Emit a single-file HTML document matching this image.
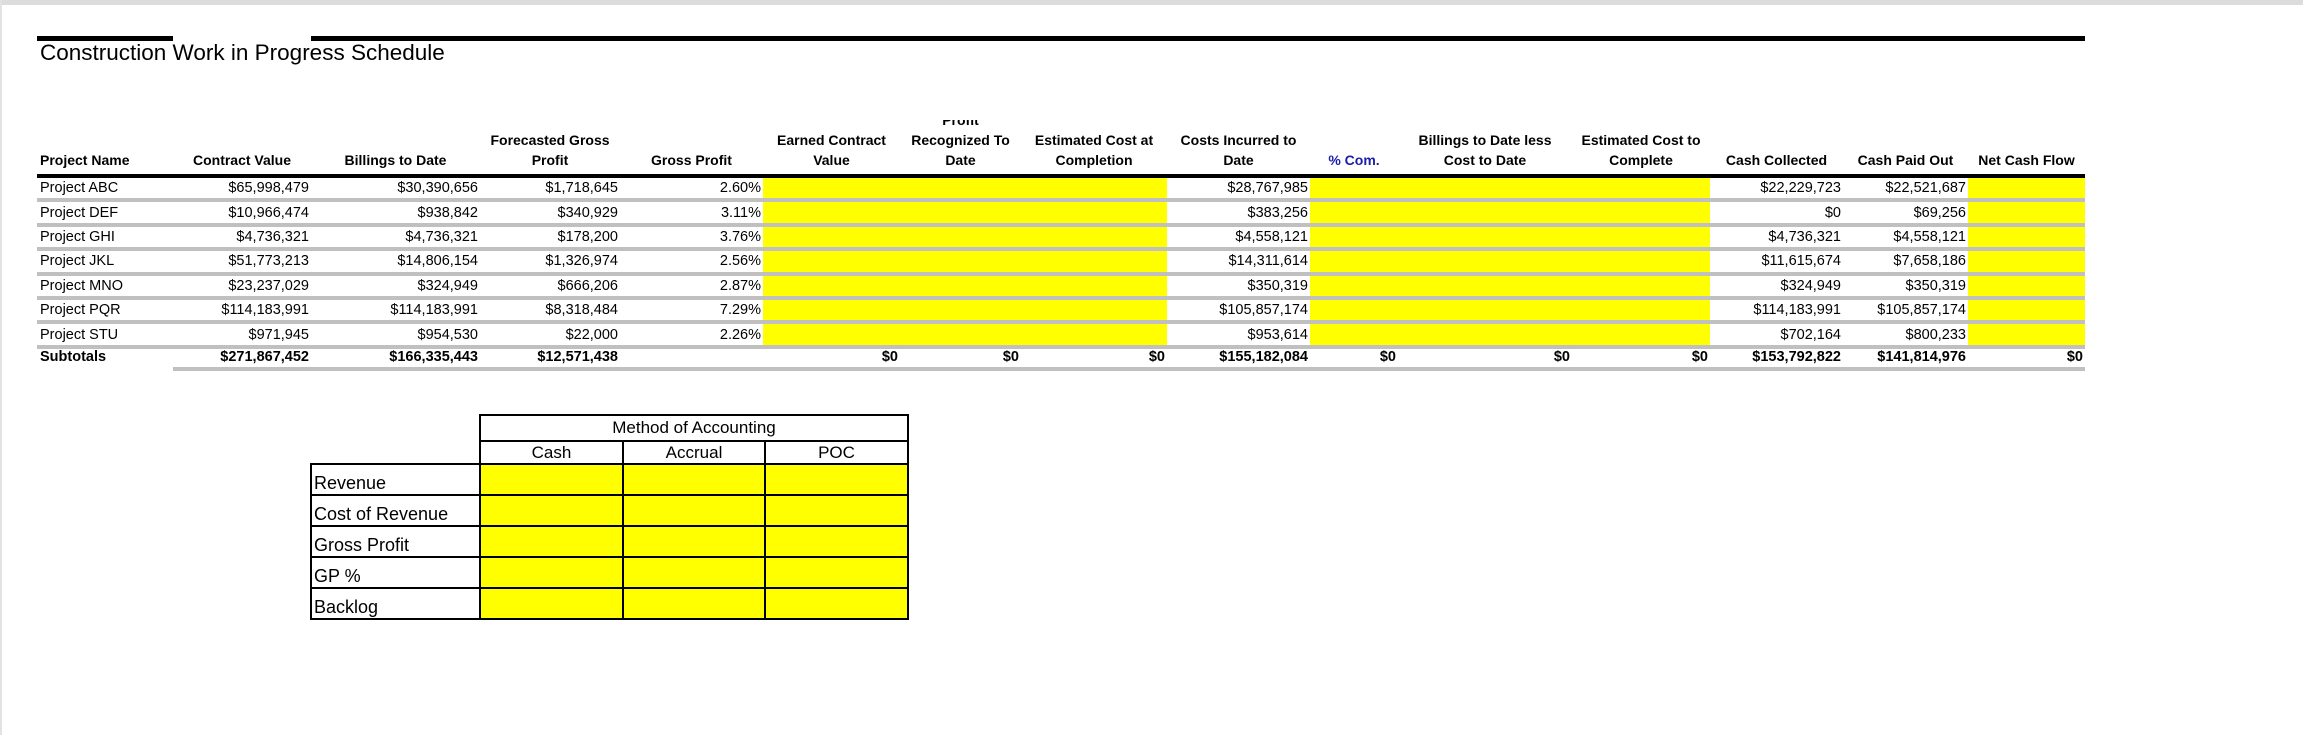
<!DOCTYPE html>
<html><head><meta charset="utf-8"><style>
html,body{margin:0;padding:0;background:#fff;}
body{width:2303px;height:735px;position:relative;overflow:hidden;font-family:"Liberation Sans",Arial,sans-serif;color:#000;}
.topbar{position:absolute;left:0;top:0;width:2303px;height:5px;background:#dcdcdc;}
.leftbar{position:absolute;left:0;top:0;width:2px;height:735px;background:#e2e2e2;}
.bl{position:absolute;background:#000;height:5px;top:36px;}
.title{position:absolute;left:40px;top:39px;font-size:22.5px;line-height:28px;white-space:nowrap;}
table.m{position:absolute;left:37px;top:120px;border-collapse:separate;border-spacing:0;table-layout:fixed;width:2048px;}
table.m td{padding:0 2px 0 0;white-space:nowrap;text-align:right;font-size:14.5px;overflow:hidden;}
table.m tr.h td{height:54px;vertical-align:bottom;border-bottom:4px solid #000;font-weight:bold;font-size:14px;text-align:center;padding:0;}
table.m tr.h td div{height:54px;overflow:hidden;display:flex;flex-direction:column;justify-content:flex-end;line-height:20px;padding-bottom:4px;box-sizing:border-box;}
table.m tr.r td{height:20.4px;line-height:20px;border-bottom:4px solid #c0c0c0;}
table.m td.n{text-align:left;padding-left:3px;}
table.m tr.h td.n{text-align:left;padding-left:3px;}
.y{background:#ffff00;}
table.m tr.s td{height:18px;line-height:16px;vertical-align:top;font-weight:bold;font-size:14.5px;border-bottom:4px solid #c0c0c0;}
table.m tr.s td.n{border-bottom:none;}
.blue{color:#1c1caa;}
table.b{position:absolute;left:310px;top:414px;border-collapse:collapse;table-layout:fixed;}
table.b td{border:2.5px solid #000;padding:0 0 0 2px;font-size:18px;white-space:nowrap;}
table.b td.e{border:none;}
</style></head><body>
<div class="topbar"></div><div class="leftbar"></div>
<div class="bl" style="left:37px;width:136px;"></div>
<div class="bl" style="left:311px;width:1774px;"></div>
<div class="title">Construction Work in Progress Schedule</div>
<table class="m">
<colgroup><col style="width:136px"><col style="width:138px"><col style="width:169px"><col style="width:140px"><col style="width:143px"><col style="width:137px"><col style="width:121px"><col style="width:146px"><col style="width:143px"><col style="width:88px"><col style="width:174px"><col style="width:138px"><col style="width:133px"><col style="width:125px"><col style="width:117px"></colgroup>
<tr class="h">
<td class="n"><div>Project Name</div></td>
<td><div>Contract Value</div></td>
<td><div>Billings to Date</div></td>
<td><div>Forecasted Gross<br>Profit</div></td>
<td><div>Gross Profit</div></td>
<td><div>Earned Contract<br>Value</div></td>
<td><div>Profit<br>Recognized To<br>Date</div></td>
<td><div>Estimated Cost at<br>Completion</div></td>
<td><div>Costs Incurred to<br>Date</div></td>
<td class="blue"><div>% Com.</div></td>
<td><div>Billings to Date less<br>Cost to Date</div></td>
<td><div>Estimated Cost to<br>Complete</div></td>
<td><div>Cash Collected</div></td>
<td><div>Cash Paid Out</div></td>
<td><div>Net Cash Flow</div></td>
</tr>
<tr class="r"><td class="n">Project ABC</td><td>$65,998,479</td><td>$30,390,656</td><td>$1,718,645</td><td>2.60%</td><td class="y"></td><td class="y"></td><td class="y"></td><td>$28,767,985</td><td class="y"></td><td class="y"></td><td class="y"></td><td>$22,229,723</td><td>$22,521,687</td><td class="y"></td></tr>
<tr class="r"><td class="n">Project DEF</td><td>$10,966,474</td><td>$938,842</td><td>$340,929</td><td>3.11%</td><td class="y"></td><td class="y"></td><td class="y"></td><td>$383,256</td><td class="y"></td><td class="y"></td><td class="y"></td><td>$0</td><td>$69,256</td><td class="y"></td></tr>
<tr class="r"><td class="n">Project GHI</td><td>$4,736,321</td><td>$4,736,321</td><td>$178,200</td><td>3.76%</td><td class="y"></td><td class="y"></td><td class="y"></td><td>$4,558,121</td><td class="y"></td><td class="y"></td><td class="y"></td><td>$4,736,321</td><td>$4,558,121</td><td class="y"></td></tr>
<tr class="r"><td class="n">Project JKL</td><td>$51,773,213</td><td>$14,806,154</td><td>$1,326,974</td><td>2.56%</td><td class="y"></td><td class="y"></td><td class="y"></td><td>$14,311,614</td><td class="y"></td><td class="y"></td><td class="y"></td><td>$11,615,674</td><td>$7,658,186</td><td class="y"></td></tr>
<tr class="r"><td class="n">Project MNO</td><td>$23,237,029</td><td>$324,949</td><td>$666,206</td><td>2.87%</td><td class="y"></td><td class="y"></td><td class="y"></td><td>$350,319</td><td class="y"></td><td class="y"></td><td class="y"></td><td>$324,949</td><td>$350,319</td><td class="y"></td></tr>
<tr class="r"><td class="n">Project PQR</td><td>$114,183,991</td><td>$114,183,991</td><td>$8,318,484</td><td>7.29%</td><td class="y"></td><td class="y"></td><td class="y"></td><td>$105,857,174</td><td class="y"></td><td class="y"></td><td class="y"></td><td>$114,183,991</td><td>$105,857,174</td><td class="y"></td></tr>
<tr class="r"><td class="n">Project STU</td><td>$971,945</td><td>$954,530</td><td>$22,000</td><td>2.26%</td><td class="y"></td><td class="y"></td><td class="y"></td><td>$953,614</td><td class="y"></td><td class="y"></td><td class="y"></td><td>$702,164</td><td>$800,233</td><td class="y"></td></tr>
<tr class="s"><td class="n">Subtotals</td><td>$271,867,452</td><td>$166,335,443</td><td>$12,571,438</td><td></td><td>$0</td><td>$0</td><td>$0</td><td>$155,182,084</td><td>$0</td><td>$0</td><td>$0</td><td>$153,792,822</td><td>$141,814,976</td><td>$0</td></tr>
</table>
<table class="b">
<colgroup><col style="width:169px"><col style="width:143px"><col style="width:142px"><col style="width:143px"></colgroup>
<tr style="height:26px"><td class="e"></td><td colspan="3" style="text-align:center;font-size:17px;padding:0;">Method of Accounting</td></tr>
<tr style="height:23px"><td class="e"></td><td style="text-align:center;font-size:17px;padding:0;">Cash</td><td style="text-align:center;font-size:17px;padding:0;">Accrual</td><td style="text-align:center;font-size:17px;padding:0;">POC</td></tr>
<tr style="height:31px"><td style="vertical-align:bottom">Revenue</td><td class="y"></td><td class="y"></td><td class="y"></td></tr>
<tr style="height:31px"><td style="vertical-align:bottom">Cost of Revenue</td><td class="y"></td><td class="y"></td><td class="y"></td></tr>
<tr style="height:31px"><td style="vertical-align:bottom">Gross Profit</td><td class="y"></td><td class="y"></td><td class="y"></td></tr>
<tr style="height:31px"><td style="vertical-align:bottom">GP %</td><td class="y"></td><td class="y"></td><td class="y"></td></tr>
<tr style="height:31px"><td style="vertical-align:bottom">Backlog</td><td class="y"></td><td class="y"></td><td class="y"></td></tr>
</table>
</body></html>
